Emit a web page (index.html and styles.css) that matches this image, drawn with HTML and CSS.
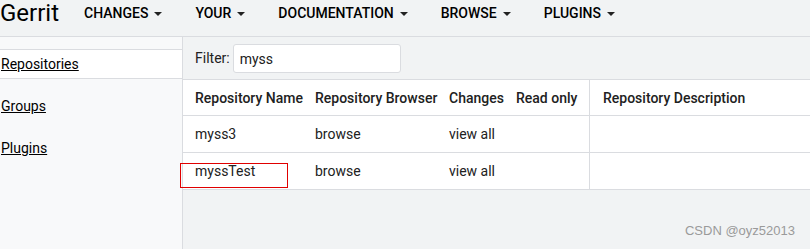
FILE: index.html
```html
<!DOCTYPE html>
<html lang="en">

<head>
    <meta charset="UTF-8">
    <title>Gerrit Code Review</title>
    <link rel="stylesheet" href="styles.css">
</head>

<body>

    <header class="top-bar">
        <span class="logo">Gerrit</span>
        <nav class="main-nav">
            <span class="nav-item">CHANGES<i class="caret"></i></span>
            <span class="nav-item">YOUR<i class="caret"></i></span>
            <span class="nav-item">DOCUMENTATION<i class="caret"></i></span>
            <span class="nav-item">BROWSE<i class="caret"></i></span>
            <span class="nav-item">PLUGINS<i class="caret"></i></span>
        </nav>
    </header>

    <div class="page">
        <aside class="sidebar">
            <ul class="side-nav">
                <li class="selected"><a href="#">Repositories</a></li>
                <li><a href="#">Groups</a></li>
                <li><a href="#">Plugins</a></li>
            </ul>
        </aside>

        <main class="content">
            <div class="filter-bar">
                <label for="filterInput">Filter:</label>
                <input type="text" id="filterInput" value="myss">
            </div>

            <table class="repo-table">
                <thead>
                    <tr>
                        <th class="col-name">Repository Name</th>
                        <th class="col-browser">Repository Browser</th>
                        <th class="col-changes">Changes</th>
                        <th class="col-readonly">Read only</th>
                        <th class="col-desc">Repository Description</th>
                    </tr>
                </thead>
                <tbody>
                    <tr>
                        <td><a href="#">myss3</a></td>
                        <td><a href="#">browse</a></td>
                        <td><a href="#">view all</a></td>
                        <td></td>
                        <td class="col-desc"></td>
                    </tr>
                    <tr>
                        <td class="marked"><a href="#">myssTest</a><span class="mark-box"></span></td>
                        <td><a href="#">browse</a></td>
                        <td><a href="#">view all</a></td>
                        <td></td>
                        <td class="col-desc"></td>
                    </tr>
                </tbody>
            </table>

            <span class="watermark">CSDN @oyz52013</span>
        </main>
    </div>

</body>

</html>
```

FILE: styles.css
```css
body {
    font-family: Roboto, 'Liberation Sans', sans-serif;
    margin: 0;
    color: #212121;
    font-size: 14px;
    background-color: #f1f3f4;
    height: 249px;
    overflow: hidden;
}

.top-bar {
    display: flex;
    align-items: flex-start;
    height: 36px;
    border-bottom: 1px solid #dadce0;
    background-color: #f1f3f4;
}

.logo {
    font-size: 24px;
    line-height: 26px;
    color: #000;
    margin-right: 25px;
}

.main-nav {
    display: flex;
    gap: 33px;
}

.nav-item {
    display: flex;
    align-items: center;
    font-size: 14px;
    font-weight: 500;
    line-height: 26px;
    color: #000;
}

.caret {
    width: 0;
    height: 0;
    margin-left: 6px;
    margin-top: 1px;
    border-left: 4px solid transparent;
    border-right: 4px solid transparent;
    border-top: 4px solid #222;
}

.page {
    display: flex;
    height: 212px;
}

.sidebar {
    width: 182px;
    border-right: 1px solid #dadce0;
    background-color: #f8f9fa;
}

.side-nav {
    list-style: none;
    margin: 0;
    padding: 12px 0 0;
}

.side-nav li {
    height: 28px;
    line-height: 28px;
    border-top: 1px solid transparent;
    border-bottom: 1px solid transparent;
    margin-bottom: 12px;
    padding-left: 1px;
}

.side-nav li.selected {
    background-color: #fff;
    border-color: #dadce0;
}

.side-nav a {
    color: #000;
}

.content {
    position: relative;
    flex: 1;
    background-color: #f1f3f4;
}

.filter-bar {
    display: flex;
    align-items: center;
    height: 42px;
    padding-left: 12px;
    border-bottom: 1px solid #dadce0;
}

.filter-bar label {
    margin-right: 3px;
    color: #212121;
}

.filter-bar input {
    width: 154px;
    height: 27px;
    padding: 0 6px;
    font-family: inherit;
    font-size: 14px;
    color: #212121;
    border: 1px solid #dadce0;
    border-radius: 3px;
    background-color: #fff;
    margin-top: 1px;
}

.repo-table {
    width: 100%;
    border-collapse: collapse;
    table-layout: fixed;
    background-color: #fff;
}

.repo-table th,
.repo-table td {
    text-align: left;
    font-weight: 500;
    padding: 0 0 0 12px;
    border-bottom: 1px solid #dadce0;
    white-space: nowrap;
}

.repo-table td {
    font-weight: 400;
    height: 36px;
}

.repo-table th {
    height: 35px;
}

.repo-table a {
    color: #212121;
    text-decoration: none;
}

.col-name {
    width: 108px;
}

.col-browser {
    width: 122px;
}

.col-changes {
    width: 55px;
}

.col-readonly {
    width: 73px;
}

.repo-table .col-desc {
    border-left: 1px solid #dadce0;
    padding-left: 13px;
}

.marked {
    position: relative;
}

.mark-box {
    position: absolute;
    left: -3px;
    top: 10px;
    width: 106px;
    height: 23px;
    border: 1px solid #e00000;
}

.watermark {
    position: absolute;
    right: 15px;
    top: 186px;
    font-family: 'Liberation Sans', Arial, sans-serif;
    font-size: 13px;
    color: #9a9a9a;
}
```
